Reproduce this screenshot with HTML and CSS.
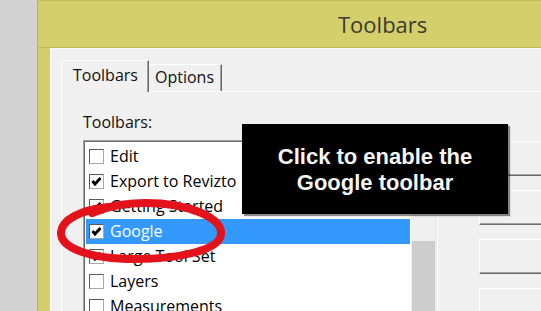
FILE: index.html
```html
<!DOCTYPE html>
<html lang="en">
<head>
  <meta charset="UTF-8">
  <title>Toolbars</title>
  <link rel="stylesheet" href="styles.css">
</head>
<body>

<div class="screen">
  <div class="desk"></div>

  <!-- Dialog window -->
  <div class="window">
    <div class="titlebar">Toolbars</div>
    <div class="client">
      <div class="tabs">
        <div class="tab active">Toolbars</div>
        <div class="tab">Options</div>
      </div>
      <div class="panel">
        <div class="list-col">
          <div class="label">Toolbars:</div>
          <div class="listbox">
            <div class="listbox-inner">
              <div class="items">
                <div class="item"><span class="check"></span>Edit</div>
                <div class="item"><span class="check"><svg viewBox="0 0 13 13"><polyline points="2.5,6 5,9 10.5,3"/></svg></span>Export to Revizto</div>
                <div class="item"><span class="check"><svg viewBox="0 0 13 13"><polyline points="2.5,6 5,9 10.5,3"/></svg></span>Getting Started</div>
                <div class="item sel"><span class="check"><svg viewBox="0 0 13 13"><polyline points="2.5,6 5,9 10.5,3"/></svg></span>Google</div>
                <div class="item"><span class="check"><svg viewBox="0 0 13 13"><polyline points="2.5,6 5,9 10.5,3"/></svg></span>Large Tool Set</div>
                <div class="item"><span class="check"></span>Layers</div>
                <div class="item"><span class="check"></span>Measurements</div>
              </div>
              <div class="scrollbar"><div class="thumb"></div></div>
            </div>
          </div>
        </div>
        <div class="buttons">
          <div class="btn"></div>
          <div class="btn"></div>
          <div class="btn"></div>
          <div class="btn"></div>
        </div>
      </div>
    </div>
  </div>

  <!-- hand drawn red circle round the Google row -->
  <svg class="scribble" viewBox="0 0 541 311">
    <path d="M92,213 C110,205 128,203 145,203 C190,203 222,218 221,234 C220,250 180,259 135,259 C90,259 60,248 61,232 C62,220 80,210 108,207"/>
  </svg>

  <div class="callout">Click to enable the<br>Google toolbar</div>
</div>

</body>
</html>
```

FILE: styles.css
```css
body {
  margin: 0;
  padding: 0;
  width: 541px;
  height: 311px;
  overflow: hidden;
  font-family: 'Open Sans', 'Noto Sans', sans-serif;
}

.screen {
  position: relative;
  display: flex;
  height: 311px;
  background: #d2d2d2;
}

.desk {
  width: 37px;
  flex-shrink: 0;
}

/* Window frame */
.window {
  flex: 1;
  min-width: 0;
  display: flex;
  flex-direction: column;
  overflow: hidden;
  background: #d5cf6b;
  border-left: 1px solid #bcb55b;
  border-top: 1px solid #c3bc5c;
}

.titlebar {
  height: 46px;
  line-height: 46px;
  padding-left: 300px;
  font-size: 22px;
  color: #3b3b30;
  border-bottom: 1px solid #c1ba5d;
  white-space: nowrap;
}

.client {
  flex: 1;
  margin-left: 12px;
  padding: 11px 0 0 10px;
  background: #f0f0f0;
  border-left: 1px solid #fbfbfb;
  border-top: 1px solid #fbfbfb;
}

/* Tabs */
.tabs {
  display: flex;
  align-items: flex-end;
  position: relative;
  z-index: 1;
}

.tab {
  box-sizing: border-box;
  font-size: 16px;
  line-height: 22px;
  color: #111;
  background: #f0f0f0;
  border-top: 1px solid #fff;
  border-right: 1px solid #696969;
  box-shadow: inset -1px 0 #a0a0a0;
  white-space: nowrap;
}

.tab.active {
  width: 88px;
  height: 32px;
  margin-bottom: -1px;
  padding: 3px 0 0 11px;
  border-left: 1px solid #fff;
  border-top-left-radius: 2px;
}

.tab:not(.active) {
  width: 73px;
  height: 27px;
  padding: 1px 0 0 6px;
}

.panel {
  display: flex;
  padding: 19px 0 0 21px;
  border-top: 1px solid #fff;
  border-left: 1px solid #fff;
  height: 260px;
}

.list-col {
  width: 355px;
  flex-shrink: 0;
}

.label {
  font-size: 16px;
  line-height: 22px;
  color: #111;
  margin-bottom: 7px;
}

/* Listbox */
.listbox {
  border: 1px solid;
  border-color: #a0a0a0 #fff #fff #a0a0a0;
}

.listbox-inner {
  display: flex;
  height: 200px;
  background: #fff;
  border: 1px solid;
  border-color: #696969 #e3e3e3 #e3e3e3 #696969;
}

.items {
  flex: 1;
  padding: 2px 1px 0 1px;
}

.item {
  display: flex;
  align-items: center;
  height: 25px;
  padding-left: 3px;
  font-size: 16px;
  line-height: 25px;
  color: #000;
  white-space: nowrap;
}

.item.sel {
  background: #3399ff;
  color: #fff;
}

.check {
  box-sizing: border-box;
  width: 15px;
  height: 15px;
  margin-right: 6px;
  background: #fff;
  border: 1px solid;
  border-color: #5a5a5a #a8a8a8 #a8a8a8 #5a5a5a;
  display: flex;
}

.check svg {
  width: 13px;
  height: 13px;
}

.check polyline {
  fill: none;
  stroke: #000;
  stroke-width: 2.8;
}

.scrollbar {
  width: 25px;
  background: #f0f0f0;
}

.thumb {
  margin: 99px 1px 0 1px;
  height: 120px;
  background: #cdcdcd;
}

/* Buttons on the right, cut off by the picture */
.buttons {
  margin-left: 41px;
  padding-top: 30px;
}

.btn {
  box-sizing: border-box;
  width: 120px;
  height: 35px;
  margin-bottom: 14px;
  background: #f0f0f0;
  border-top: 1px solid #fff;
  border-left: 1px solid #fff;
  border-bottom: 1px solid #696969;
  box-shadow: inset 0 -1px #a0a0a0;
}

/* Annotations */
.scribble {
  position: absolute;
  left: 0;
  top: 0;
  width: 541px;
  height: 311px;
  pointer-events: none;
}

.scribble path {
  fill: none;
  stroke: #e3121b;
  stroke-width: 8;
  stroke-linecap: round;
}

.callout {
  position: absolute;
  left: 242px;
  top: 124px;
  width: 266px;
  height: 90px;
  box-sizing: border-box;
  padding-top: 20px;
  background: #000;
  box-shadow: 2px 2px 1px rgba(0, 0, 0, 0.45);
  color: #f6f6f6;
  font-family: 'Liberation Sans', Arial, sans-serif;
  font-weight: bold;
  font-size: 22px;
  line-height: 26px;
  text-align: center;
}
```
